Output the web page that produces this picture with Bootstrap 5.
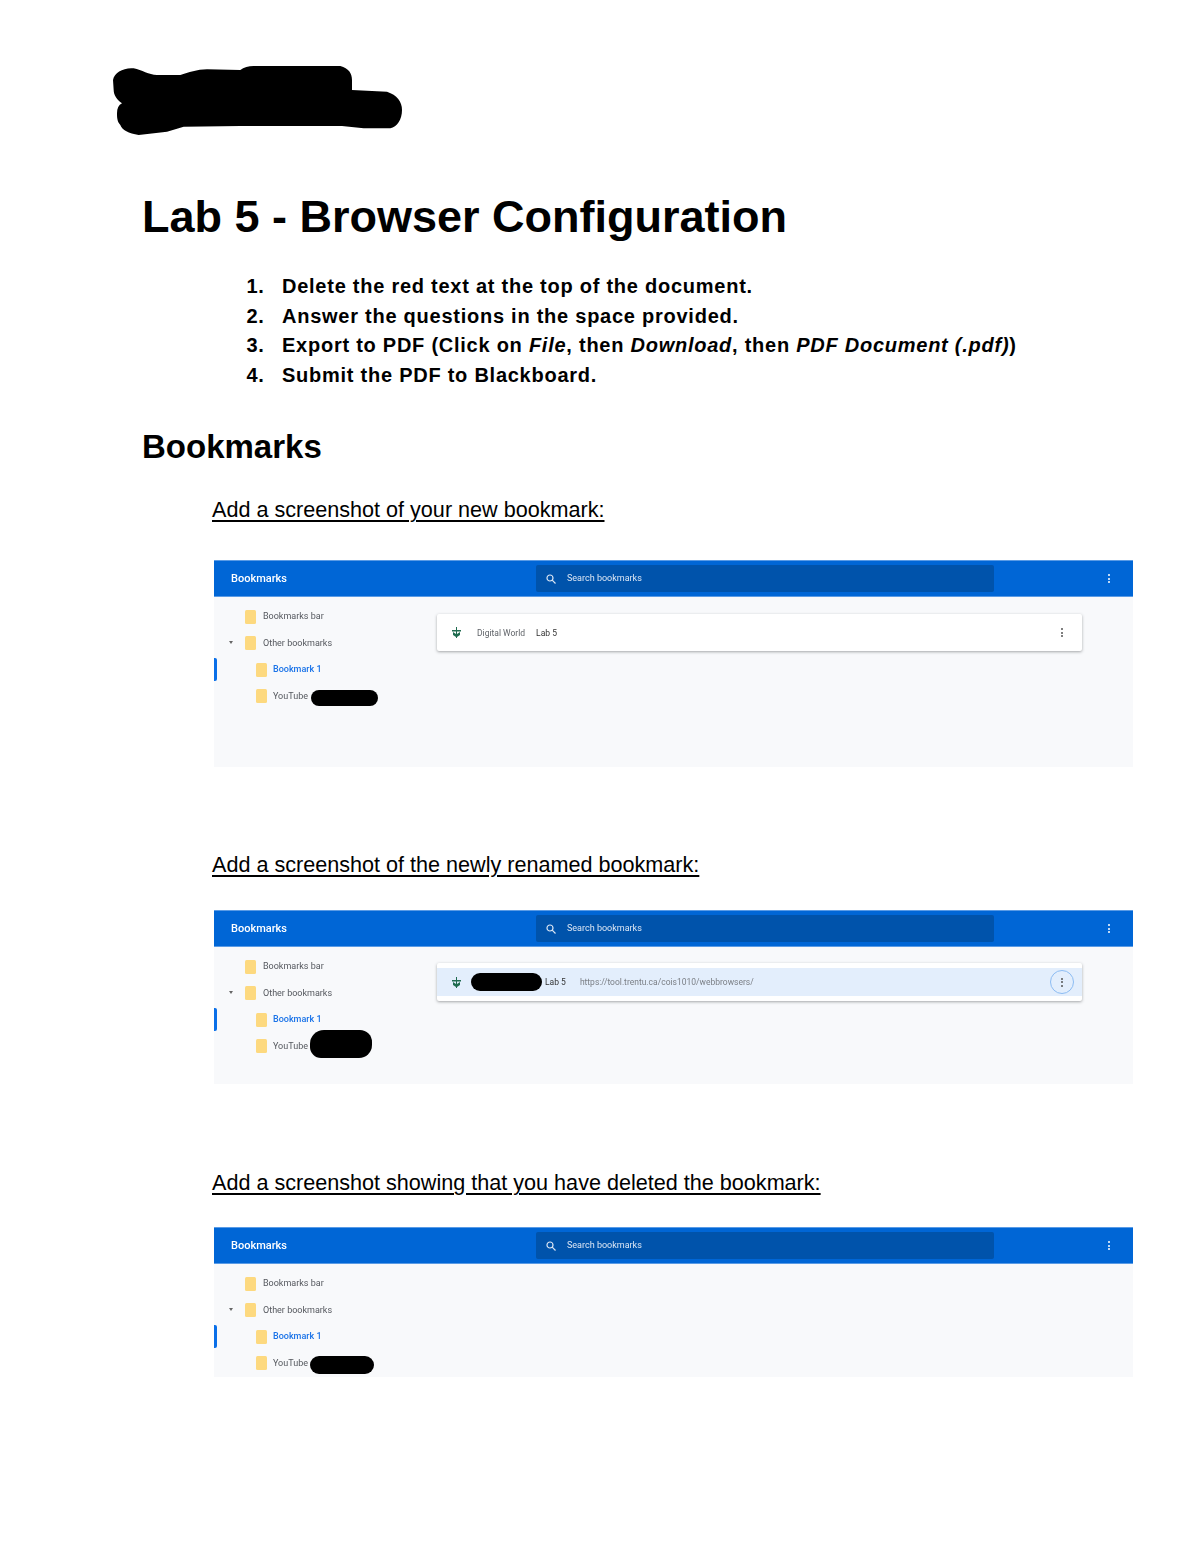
<!DOCTYPE html>
<html lang="en"><head><meta charset="utf-8"><title>Lab 5 - Browser Configuration</title>
<link href="https://cdn.jsdelivr.net/npm/bootstrap@5.3.0/dist/css/bootstrap.min.css" rel="stylesheet">
<style>
html,body{background:#fff;margin:0}
.doc-page{height:1553px;overflow:hidden;padding:66px 67px 0 142px;font-family:"Liberation Sans",Arial,sans-serif;color:#000}
.scribble{display:block;margin-left:-29px;width:290px;height:70px}
.doc-title{font:700 45px/54px "Liberation Sans",Arial,sans-serif;margin:54px 0 0}
.steps{margin:28px 0 0;padding-left:140px;font-weight:700;font-size:20px;line-height:29.6px;letter-spacing:.75px}
.steps li::marker{content:counter(list-item) ".\00a0\00a0\2009"}
.doc-h2{font:700 33px/40px "Liberation Sans",Arial,sans-serif;margin:37px 0 0}
.prompt{font-size:21.6px;line-height:26px;margin:0 0 0 70px;text-decoration:underline;text-underline-offset:3px}
.p1{margin-top:30px}.p2{margin-top:85px}.p3{margin-top:86px}
.shot{margin-left:72px;width:919px;background:#f8f9fb;font-family:Roboto,sans-serif;overflow:hidden}
.s1{height:207px;margin-top:37px}.s2{height:174px;margin-top:32px}.s3{height:150px;margin-top:31px}
.shot-head{height:37px;background:#0066d6;color:#fff;padding:0 22px 0 17px;border-top:1px solid #5a9be5;border-bottom:1px solid #5a9be5}
.head-title{width:305px;font-size:11px;font-weight:500}
.search-box{width:458px;height:27px;background:#0053ab;border-radius:2px;color:#dbe6f4;font-size:9px;padding-left:10px;gap:11px}
.blurred{filter:blur(.7px)}
.kebab{gap:1.5px;width:3px;margin-left:auto}
.kebab i{display:block;width:2px;height:2px;border-radius:50%;background:#fff}
.side{width:223px;padding-top:6px;font-size:9px;color:#55585e}
.tree-row{height:26.6px;padding-left:31px;gap:7px;position:relative}
.tree-row.deep{padding-left:42px;gap:6px}
.tree-row.on{color:#1a73e8;font-weight:500}
.tree-row.on::before{content:"";position:absolute;left:0;top:1px;width:3px;height:23px;background:#0a6fe8;border-radius:0 2px 2px 0}
.arrow{position:absolute;left:15px;top:11px;width:0;height:0;border:2.5px solid transparent;border-top:3px solid #666;border-bottom:0}
.folder{width:11px;height:14px;background:#fdd97f;border-radius:1.5px;flex:none}
.blob{background:#000;border-radius:9px;flex:none}
.b1{width:67px;height:16px;margin-left:-3px;margin-top:4px}
.b2{width:62px;height:28px;border-radius:14px 12px 13px 11px;margin-left:-4px;margin-top:-5px}
.b3{width:64px;height:18px;margin-left:-4px;margin-top:3px}
.b4{width:71px;height:18px;border-radius:9px;margin-left:9px}
.main-pane{width:645px;padding-top:17px}
.s2 .main-pane{padding-top:16px}
.mini-card{height:37px;background:#fff;border-radius:2px;box-shadow:0 1px 3px rgba(60,64,67,.45);padding-left:14px;padding-right:18px;font-size:8.5px;color:#5f6368}
.s2 .mini-card{height:38px;padding:5px 0 5px}
.sel-row{height:100%;width:100%;background:#e3eefc;padding:0 8px 0 14px}
.fav{width:11px;height:11px;flex:none}
.t-a{margin-left:15px}.t-b{margin-left:11px;color:#333}.t-c{margin-left:14px;color:#7b7f85}
.s2 .t-b{margin-left:3px}
.kebab.dark i{background:#555}
.ring{width:24px;height:24px;border:1.5px solid #8cbcf3;border-radius:50%;margin-left:auto}
.ring .kebab{margin-left:0}
</style></head>
<body>
<main class="doc-page">
<svg class="scribble" viewBox="38 48 870 210"><path d="M100 55 C125 60 145 75 170 75 L240 75 C265 68 290 58 320 58 L420 60 C430 52 445 48 460 48 L720 48 C745 55 755 70 755 90 L755 120 L860 125 C890 135 905 155 905 180 C905 210 890 230 870 235 L790 235 L725 228 L420 228 L250 230 L200 245 L115 255 C85 250 65 240 60 225 C50 215 50 200 50 190 C50 175 55 165 65 160 C50 150 40 135 40 120 L38 90 C42 68 70 52 100 55 Z" fill="#000"/></svg>
<h1 class="doc-title">Lab 5 - Browser Configuration</h1>
<ol class="steps">
<li>Delete the red text at the top of the document.</li>
<li>Answer the questions in the space provided.</li>
<li>Export to PDF (Click on <em>File</em>, then <em>Download</em>, then <em>PDF Document (.pdf)</em>)</li>
<li>Submit the PDF to Blackboard.</li>
</ol>
<h2 class="doc-h2">Bookmarks</h2>

<p class="prompt p1">Add a screenshot of your new bookmark:</p>
<section class="shot s1">
 <div class="shot-head d-flex align-items-center blurred"><div class="head-title">Bookmarks</div><div class="search-box d-flex align-items-center"><svg width="10" height="10" viewBox="0 0 10 10" fill="none" stroke="#dbe6f4" stroke-width="1.2"><circle cx="4" cy="4" r="3"/><path d="M6.2 6.2 9.5 9.5"/></svg><span>Search bookmarks</span></div><div class="kebab d-flex flex-column"><i></i><i></i><i></i></div></div>
 <div class="d-flex">
  <div class="side blurred">
   <div class="tree-row d-flex align-items-center"><span class="folder"></span><span>Bookmarks bar</span></div>
   <div class="tree-row d-flex align-items-center"><span class="arrow"></span><span class="folder"></span><span>Other bookmarks</span></div>
   <div class="tree-row deep on d-flex align-items-center"><span class="folder"></span><span>Bookmark 1</span></div>
   <div class="tree-row deep d-flex align-items-center"><span class="folder"></span><span>YouTube</span><span class="blob b1">&nbsp;</span></div>
  </div>
  <div class="main-pane"><div class="mini-card d-flex align-items-center blurred">
   <svg class="fav" viewBox="0 0 11 11" fill="#1f6b4f"><path d="M5 0h1v11H5zM1 3h9v1.5H1zM2 5l3 2v3L2 8zM9 5 6 7v3l3-2z"/></svg>
   <span class="t-a">Digital World</span><span class="t-b">Lab 5</span>
   <div class="kebab dark d-flex flex-column"><i></i><i></i><i></i></div>
  </div></div>
 </div>
</section>

<p class="prompt p2">Add a screenshot of the newly renamed bookmark:</p>
<section class="shot s2">
 <div class="shot-head d-flex align-items-center blurred"><div class="head-title">Bookmarks</div><div class="search-box d-flex align-items-center"><svg width="10" height="10" viewBox="0 0 10 10" fill="none" stroke="#dbe6f4" stroke-width="1.2"><circle cx="4" cy="4" r="3"/><path d="M6.2 6.2 9.5 9.5"/></svg><span>Search bookmarks</span></div><div class="kebab d-flex flex-column"><i></i><i></i><i></i></div></div>
 <div class="d-flex">
  <div class="side blurred">
   <div class="tree-row d-flex align-items-center"><span class="folder"></span><span>Bookmarks bar</span></div>
   <div class="tree-row d-flex align-items-center"><span class="arrow"></span><span class="folder"></span><span>Other bookmarks</span></div>
   <div class="tree-row deep on d-flex align-items-center"><span class="folder"></span><span>Bookmark 1</span></div>
   <div class="tree-row deep d-flex align-items-center"><span class="folder"></span><span>YouTube</span><span class="blob b2">&nbsp;</span></div>
  </div>
  <div class="main-pane"><div class="mini-card blurred"><div class="sel-row d-flex align-items-center">
   <svg class="fav" viewBox="0 0 11 11" fill="#1f6b4f"><path d="M5 0h1v11H5zM1 3h9v1.5H1zM2 5l3 2v3L2 8zM9 5 6 7v3l3-2z"/></svg>
   <span class="blob b4">&nbsp;</span><span class="t-b">Lab 5</span><span class="t-c">https://tool.trentu.ca/cois1010/webbrowsers/</span>
   <div class="ring d-flex align-items-center justify-content-center"><div class="kebab dark d-flex flex-column"><i></i><i></i><i></i></div></div>
  </div></div></div>
 </div>
</section>

<p class="prompt p3">Add a screenshot showing that you have deleted the bookmark:</p>
<section class="shot s3">
 <div class="shot-head d-flex align-items-center blurred"><div class="head-title">Bookmarks</div><div class="search-box d-flex align-items-center"><svg width="10" height="10" viewBox="0 0 10 10" fill="none" stroke="#dbe6f4" stroke-width="1.2"><circle cx="4" cy="4" r="3"/><path d="M6.2 6.2 9.5 9.5"/></svg><span>Search bookmarks</span></div><div class="kebab d-flex flex-column"><i></i><i></i><i></i></div></div>
 <div class="d-flex">
  <div class="side blurred">
   <div class="tree-row d-flex align-items-center"><span class="folder"></span><span>Bookmarks bar</span></div>
   <div class="tree-row d-flex align-items-center"><span class="arrow"></span><span class="folder"></span><span>Other bookmarks</span></div>
   <div class="tree-row deep on d-flex align-items-center"><span class="folder"></span><span>Bookmark 1</span></div>
   <div class="tree-row deep d-flex align-items-center"><span class="folder"></span><span>YouTube</span><span class="blob b3">&nbsp;</span></div>
  </div>
 </div>
</section>
</main>
<script src="https://cdn.jsdelivr.net/npm/bootstrap@5.3.0/dist/js/bootstrap.bundle.min.js"></script>
</body></html>
